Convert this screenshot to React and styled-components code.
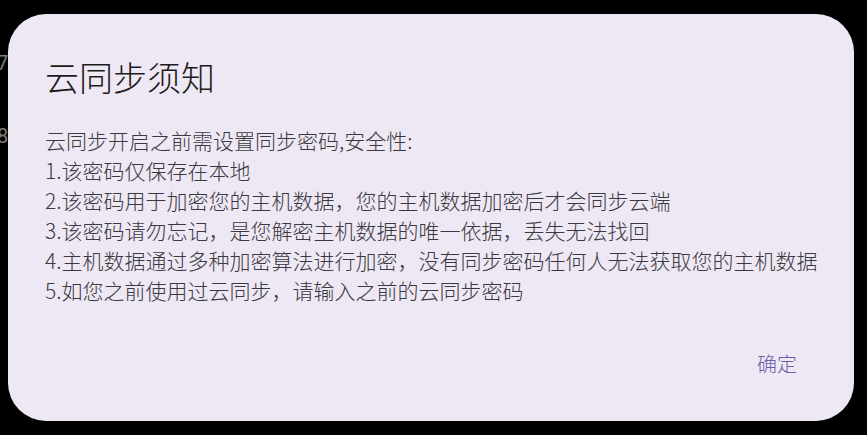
import styled, { createGlobalStyle } from 'styled-components';

const Global = createGlobalStyle`
  html, body {
    margin: 0;
    padding: 0;
    background: #000;
    overflow: hidden;
  }
  body {
    font-family: "Noto Sans CJK SC", "Noto Sans", sans-serif;
  }
`;

const notes = [
  '云同步开启之前需设置同步密码,安全性:',
  '1.该密码仅保存在本地',
  '2.该密码用于加密您的主机数据，您的主机数据加密后才会同步云端',
  '3.该密码请勿忘记，是您解密主机数据的唯一依据，丢失无法找回',
  '4.主机数据通过多种加密算法进行加密，没有同步密码任何人无法获取您的主机数据',
  '5.如您之前使用过云同步，请输入之前的云同步密码',
];

const App = () => {
  return (
    <Screen>
      <Global />
      <Behind>
        <li>7.</li>
        <li>8.</li>
      </Behind>
      <Dialog>
        <Title>云同步须知</Title>
        <Body>
          {notes.map((line) => (
            <p key={line}>{line}</p>
          ))}
        </Body>
        <Actions>
          <TextButton>确定</TextButton>
        </Actions>
      </Dialog>
    </Screen>
  );
};

const Screen = styled.div`
  position: relative;
  width: 867px;
  height: 435px;
  background: #000;
  overflow: hidden;
`;

const Behind = styled.ul`
  list-style: none;
  margin: 0;
  padding: 49px 0 0 0;
  margin-left: -3px;
  display: flex;
  flex-direction: column;
  gap: 45px;

  li {
    font-family: "Roboto", "Noto Sans", sans-serif;
    font-size: 20px;
    line-height: 28px;
    color: #7d7d7d;
  }
`;

const Dialog = styled.div`
  position: absolute;
  left: 8px;
  top: 14px;
  width: 846px;
  box-sizing: border-box;
  padding: 43px 45px 38px 37px;
  background: #eee8f4;
  border-radius: 38px;
  display: flex;
  flex-direction: column;
`;

const Title = styled.h1`
  margin: 0;
  font-size: 34px;
  font-weight: 300;
  line-height: 40px;
  color: #1d1b20;
`;

const Body = styled.div`
  margin-top: 28px;

  p {
    margin: 0;
    font-size: 21px;
    font-weight: 300;
    line-height: 30px;
    color: #3b383f;
    white-space: nowrap;
  }
`;

const Actions = styled.div`
  margin-top: 38px;
  display: flex;
  justify-content: flex-end;
`;

const TextButton = styled.button`
  height: 40px;
  padding: 0 12px;
  border: none;
  background: transparent;
  font-family: "Noto Sans CJK SC", sans-serif;
  font-size: 20px;
  font-weight: 300;
  color: #6a5ea8;
  cursor: pointer;
`;

export default App;
